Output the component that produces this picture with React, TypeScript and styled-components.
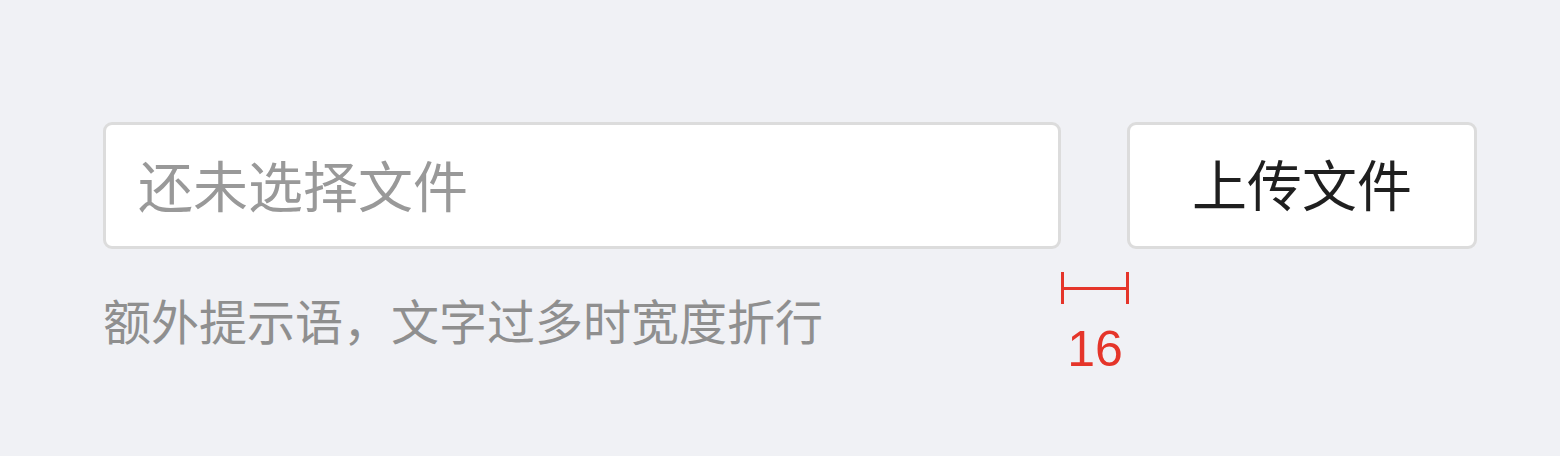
import React from 'react';
import styled, {createGlobalStyle} from "styled-components";

const GlobalStyle = createGlobalStyle`
    html, body {
        margin: 0;
        padding: 0;
        background: #f0f1f5;
        font-family: 'Noto Sans CJK SC', 'Noto Sans', sans-serif;
    }
`

export default function App() {
    return (
        <Page>
            <GlobalStyle/>
            <Row>
                <FileField>
                    <Placeholder>还未选择文件</Placeholder>
                </FileField>
                <UploadButton>上传文件</UploadButton>
            </Row>
            <Footer>
                <Hint>额外提示语，文字过多时宽度折行</Hint>
                <Measure>
                    <Bracket/>
                    <MeasureLabel>16</MeasureLabel>
                </Measure>
            </Footer>
        </Page>
    );
}

const Page = styled.div`
    width: 1560px;
    height: 456px;
    box-sizing: border-box;
    padding: 122px 0 0 103px;
`

const Row = styled.div`
    display: flex;
    gap: 66px;
    height: 127px;
`

const FileField = styled.div`
    width: 958px;
    box-sizing: border-box;
    background: #fff;
    border: 3px solid #dcdcdc;
    border-radius: 9px;
    display: flex;
    align-items: center;
    padding-left: 32px;
`

const Placeholder = styled.span`
    font-size: 55px;
    color: #999;
    line-height: 1;
    margin-top: -4px;
`

const UploadButton = styled.button`
    width: 350px;
    box-sizing: border-box;
    background: #fff;
    border: 3px solid #dcdcdc;
    border-radius: 9px;
    font-family: inherit;
    font-size: 55px;
    color: #1f1f1f;
    line-height: 1;
    padding: 0 0 6px;
`

const Footer = styled.div`
    display: flex;
    align-items: flex-start;
`

const Hint = styled.p`
    width: 958px;
    margin: 40px 0 0;
    font-size: 48px;
    line-height: 60px;
    color: #8f8f8f;
`

const Measure = styled.div`
    width: 68px;
    margin-top: 23px;
    display: flex;
    flex-direction: column;
    align-items: center;
`

const Bracket = styled.div`
    width: 68px;
    height: 32px;
    box-sizing: border-box;
    border-left: 3px solid #e5352a;
    border-right: 3px solid #e5352a;
    background: linear-gradient(#e5352a, #e5352a) center / 100% 3px no-repeat;
`

const MeasureLabel = styled.span`
    margin-top: 17px;
    font-family: 'Liberation Sans', sans-serif;
    font-size: 50px;
    line-height: 56px;
    color: #e5352a;
`
